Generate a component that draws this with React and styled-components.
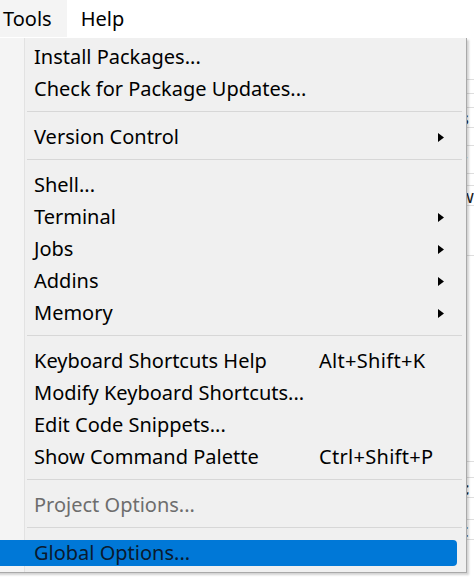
import styled, { createGlobalStyle } from "styled-components";

const GlobalStyle = createGlobalStyle`
  html, body {
    margin: 0;
    padding: 0;
    background: #ffffff;
    overflow: hidden;
  }
  body {
    font-family: "Noto Sans", "Open Sans", sans-serif;
  }
`;

const Page = styled.div`
  position: relative;
  width: 474px;
  height: 578px;
  overflow: hidden;
  background: #ffffff;
`;

const MenuBar = styled.div`
  display: flex;
  height: 38px;
  background: #ffffff;
`;

const MenuBarItem = styled.div`
  display: flex;
  align-items: center;
  height: 37px;
  padding: 0 15px 0 ${(p) => (p.$first ? 3 : 14)}px;
  font-size: 20px;
  color: #000;
  background: ${(p) => (p.$open ? "#f4f4f4" : "transparent")};
`;

const Workspace = styled.div`
  display: flex;
  height: 540px;
`;

const LeftPane = styled.div`
  width: 272px;
  background: #ffffff;
`;

const RightPane = styled.div`
  flex: 1;
  display: flex;
  flex-direction: column;
  background: #ffffff;
`;

const PaneRow = styled.div`
  height: ${(p) => p.$h}px;
  flex-shrink: 0;
  box-sizing: border-box;
  border-bottom: 1px solid #dedede;
  padding-left: 196px;
  display: flex;
  align-items: center;
  font-size: 18px;
  font-weight: ${(p) => (p.$bold ? 700 : 400)};
  color: #222;
  white-space: nowrap;
  overflow: hidden;
`;

const Menu = styled.div`
  position: absolute;
  top: 38px;
  left: -8px;
  width: 475px;
  padding: 3px 0;
  box-sizing: border-box;
  background: linear-gradient(
    to right,
    #f4f4f4 0 32px,
    #e2e2e2 32px 33px,
    #f0f0f0 33px
  );
  border-right: 1px solid #a9a9a9;
  border-bottom: 1px solid #a9a9a9;
  box-shadow: 2px 2px 2px rgba(0, 0, 0, 0.18);
`;

const Item = styled.div`
  display: grid;
  grid-template-columns: 285px 110px 16px;
  align-items: center;
  height: ${(p) => (p.$active ? 26 : 32)}px;
  margin: ${(p) => (p.$active ? "3px 9px 3px 0" : "0")};
  padding-left: 42px;
  border-radius: ${(p) => (p.$active ? "0 4px 4px 0" : "0")};
  background: ${(p) => (p.$active ? "#0078d7" : "transparent")};
  color: ${(p) => (p.$disabled ? "#6d6d6d" : p.$active ? "#0a1a2e" : "#000")};
  font-size: 20px;
  line-height: 26px;
  white-space: nowrap;
`;

const Shortcut = styled.span`
  color: #000;
  letter-spacing: 0.3px;
`;

const Arrow = styled.svg`
  display: block;
  width: 6px;
  height: 9px;
  margin-left: 9px;
  fill: #000;
`;

const Separator = styled.div`
  display: flex;
  align-items: flex-start;
  height: 16px;
  padding: 6px 4px 0 35px;
  box-sizing: border-box;
`;

const SeparatorLine = styled.div`
  flex: 1;
  height: 1px;
  background: #d7d7d7;
`;

const menu = [
  { label: "Install Packages..." },
  { label: "Check for Package Updates..." },
  "sep",
  { label: "Version Control", sub: true },
  "sep",
  { label: "Shell..." },
  { label: "Terminal", sub: true },
  { label: "Jobs", sub: true },
  { label: "Addins", sub: true },
  { label: "Memory", sub: true },
  "sep",
  { label: "Keyboard Shortcuts Help", keys: "Alt+Shift+K" },
  { label: "Modify Keyboard Shortcuts..." },
  { label: "Edit Code Snippets..." },
  { label: "Show Command Palette", keys: "Ctrl+Shift+P" },
  "sep",
  { label: "Project Options...", disabled: true },
  "sep",
  { label: "Global Options...", active: true },
];

// rows of the panel that peeks out behind the menu's right edge
const paneRows = [
  { h: 42 },
  { h: 14 },
  { h: 14 },
  { h: 20, text: "s", bold: true },
  { h: 18 },
  { h: 28, text: "r" },
  { h: 12 },
  { h: 20, text: "w" },
  { h: 50 },
  { h: 206 },
  { h: 16 },
  { h: 20, text: "c", bold: true },
  { h: 22 },
  { h: 20, text: "c" },
];

function App() {
  return (
    <Page>
      <GlobalStyle />
      <MenuBar>
        <MenuBarItem $open $first>
          Tools
        </MenuBarItem>
        <MenuBarItem>Help</MenuBarItem>
      </MenuBar>
      <Workspace>
        <LeftPane />
        <RightPane>
          {paneRows.map((r, i) => (
            <PaneRow key={i} $h={r.h} $bold={r.bold}>
              {r.text}
            </PaneRow>
          ))}
        </RightPane>
      </Workspace>
      <Menu>
        {menu.map((m, i) =>
          m === "sep" ? (
            <Separator key={i}>
              <SeparatorLine />
            </Separator>
          ) : (
            <Item key={i} $active={m.active} $disabled={m.disabled}>
              <span>{m.label}</span>
              <Shortcut>{m.keys}</Shortcut>
              {m.sub ? (
                <Arrow viewBox="0 0 6 9">
                  <path d="M0 0 L6 4.5 L0 9 Z" />
                </Arrow>
              ) : (
                <span />
              )}
            </Item>
          )
        )}
      </Menu>
    </Page>
  );
}

export default App;
